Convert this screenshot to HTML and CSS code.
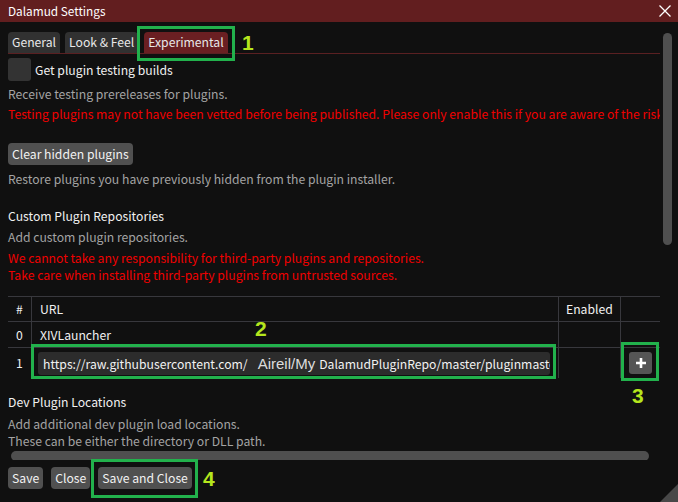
FILE: index.html
```html
<!DOCTYPE html>
<html>
<head>
<meta charset="utf-8">
<link rel="stylesheet" href="styles.css">
</head>
<body>
<div class="window">
  <div class="titlebar">
    <span class="title">Dalamud Settings</span>
    <svg class="close" width="12" height="12" viewBox="0 0 12 12"><path d="M0.5 0.5 L11.5 11.5 M11.5 0.5 L0.5 11.5" stroke="#fff" stroke-width="1.3"/></svg>
  </div>
  <div class="main">
    <div class="content">
      <div class="tabbar">
        <div class="tab">General</div>
        <div class="tab">Look &amp; Feel</div>
        <div class="tab active">Experimental</div>
      </div>
      <div class="checkrow">
        <div class="checkbox"></div>
        <span class="white">Get plugin testing builds</span>
      </div>
      <div class="line gray m5">Receive testing prereleases for plugins.</div>
      <div class="line red m3">Testing plugins may not have been vetted before being published. Please only enable this if you are aware of the risks.</div>
      <div class="btnrow m20"><div class="btn">Clear hidden plugins</div></div>
      <div class="line gray m6">Restore plugins you have previously hidden from the plugin installer.</div>
      <div class="line white m20">Custom Plugin Repositories</div>
      <div class="line gray m4">Add custom plugin repositories.</div>
      <div class="line red m4">We cannot take any responsibility for third-party plugins and repositories.</div>
      <div class="line red">Take care when installing third-party plugins from untrusted sources.</div>
      <div class="table">
        <div class="row head">
          <div class="c c1">#</div>
          <div class="c c2">URL</div>
          <div class="c c3">Enabled</div>
          <div class="c c4"></div>
        </div>
        <div class="row r0">
          <div class="c c1">0</div>
          <div class="c c2">XIVLauncher</div>
          <div class="c c3"></div>
          <div class="c c4"></div>
        </div>
        <div class="row r1">
          <div class="c c1">1</div>
          <div class="c c2"><div class="input"><span>https://raw.githubusercontent.com/</span><span class="typed">Aireil/My</span><span>DalamudPluginRepo/master/pluginmaster.json</span></div></div>
          <div class="c c3"></div>
          <div class="c c4 nob"><div class="plus"><svg width="12" height="12" viewBox="0 0 12 12"><path d="M6 1 V11 M1 6 H11" stroke="#fff" stroke-width="2.6"/></svg></div></div>
        </div>
      </div>
      <div class="line white m16">Dev Plugin Locations</div>
      <div class="line gray m5">Add additional dev plugin load locations.</div>
      <div class="line gray">These can be either the directory or DLL path.</div>
      <div class="hscroll"></div>
    </div>
    <div class="vtrack"><div class="vthumb"></div></div>
  </div>
  <div class="footer">
    <div class="btn">Save</div>
    <div class="btn">Close</div>
    <div class="btn">Save and Close</div>
  </div>
  <div class="grip"></div>

  <div class="mark box1"></div><div class="num n1">1</div>
  <div class="mark box2"></div><div class="num n2">2</div>
  <div class="mark box3"></div><div class="num n3">3</div>
  <div class="mark box4"></div><div class="num n4">4</div>
</div>
</body>
</html>
```
FILE: styles.css
```css
html, body {
  margin: 0;
  padding: 0;
  background: #101010;
}
.window {
  position: relative;
  width: 678px;
  height: 502px;
  overflow: hidden;
  background: #101010;
  font-family: "Noto Sans CJK JP", "Noto Sans", sans-serif;
  font-size: 12.2px;
  font-weight: 400;
  color: #f0f0f0;
}
.titlebar {
  height: 22px;
  background: #621e1f;
  display: flex;
  align-items: center;
  justify-content: space-between;
  padding: 0 7px 0 8px;
}
.title {
  color: #fff;
  line-height: 22px;
  font-size: 11.8px;
}
.close {
  display: block;
}
.main {
  display: flex;
  height: 438px;
}
.content {
  width: 652px;
  padding-left: 8px;
  overflow: hidden;
}
.vtrack {
  width: 18px;
}
.vthumb {
  margin: 11px 0 0 3px;
  width: 9px;
  height: 212px;
  background: #4f4f4f;
  border-radius: 5px;
}
.tabbar {
  margin-top: 10px;
  height: 21px;
  border-bottom: 1px solid #5a2022;
  display: flex;
  gap: 5px;
}
.tab {
  height: 21px;
  line-height: 21px;
  padding: 0 4px;
  background: #313131;
  border-radius: 4px 4px 0 0;
  color: #e8e8e8;
}
.tab.active {
  background: #6a1f22;
  margin-left: 1px;
}
.checkrow {
  margin-top: 4px;
  display: flex;
  align-items: center;
  height: 23px;
}
.checkbox {
  width: 23px;
  height: 23px;
  background: #333;
  border-radius: 3px;
  margin-right: 4px;
}
.line {
  height: 17px;
  line-height: 17px;
  white-space: nowrap;
}
.white { color: #f0f0f0; }
.gray { color: #a4a4a4; }
.red { color: #f00000; }
.m3 { margin-top: 3px; }
.m4 { margin-top: 4px; }
.m5 { margin-top: 5px; }
.m6 { margin-top: 6px; }
.m16 { margin-top: 16px; }
.m20 { margin-top: 20px; }
.btnrow {
  display: flex;
}
.btn {
  height: 22px;
  line-height: 22px;
  padding: 0 4px;
  background: #505050;
  border-radius: 4px;
  color: #f2f2f2;
}
.table {
  margin-top: 12px;
  width: 652px;
  border-top: 1px solid #38383d;
}
.row {
  display: flex;
  border-bottom: 1px solid #38383d;
}
.row.head { height: 24px; }
.row.r0 { height: 25px; }
.row.r1 { height: 30px; border-bottom: none; }
.c {
  display: flex;
  align-items: center;
  box-sizing: border-box;
  border-right: 1px solid #38383d;
  white-space: nowrap;
}
.c1 { width: 24px; justify-content: center; }
.c2 { width: 527px; padding-left: 8px; }
.c3 { width: 62px; padding-left: 7px; }
.c4 { width: 39px; border-right: none; justify-content: center; }
.r1 .c1 { align-items: flex-start; padding-top: 6px; }
.r1 .c2 { padding-left: 6px; }
.input {
  width: 512px;
  height: 23px;
  line-height: 23px;
  background: #2c2c2c;
  border-radius: 3px;
  padding-left: 5px;
  box-sizing: border-box;
  overflow: hidden;
  white-space: nowrap;
  color: #f2f2f2;
}
.typed {
  font-family: "Liberation Sans", Arial, sans-serif;
  font-weight: normal;
  font-size: 15px;
  color: #dcdcdc;
  margin: 0 4px 0 10px;
}
.plus {
  width: 23px;
  height: 22px;
  background: #555;
  border-radius: 3px;
  display: flex;
  align-items: center;
  justify-content: center;
}
.hscroll {
  margin: 1px 0 0 3px;
  width: 638px;
  height: 10px;
  background: #4f4f4f;
  border-radius: 5px;
}
.footer {
  margin-top: 7px;
  padding-left: 8px;
  display: flex;
  gap: 8px;
}
.grip {
  position: absolute;
  right: 0;
  bottom: 0;
  width: 0;
  height: 0;
  border-style: solid;
  border-width: 0 0 18px 18px;
  border-color: transparent transparent #484848 transparent;
}
.mark {
  position: absolute;
  border: 3px solid #22b14c;
  box-sizing: border-box;
}
.box1 { left: 137px; top: 26px; width: 98px; height: 35px; }
.box2 { left: 31px; top: 344px; width: 525px; height: 35px; }
.box3 { left: 621px; top: 342px; width: 38px; height: 39px; }
.box4 { left: 91px; top: 459px; width: 107px; height: 39px; }
.num {
  position: absolute;
  font-family: "Liberation Sans", Arial, sans-serif;
  font-weight: bold;
  font-size: 21px;
  line-height: 21px;
  color: #b5e61d;
}
.n1 { left: 242px; top: 32px; }
.n2 { left: 255px; top: 318px; }
.n3 { left: 632px; top: 385px; }
.n4 { left: 203px; top: 468px; }
```
